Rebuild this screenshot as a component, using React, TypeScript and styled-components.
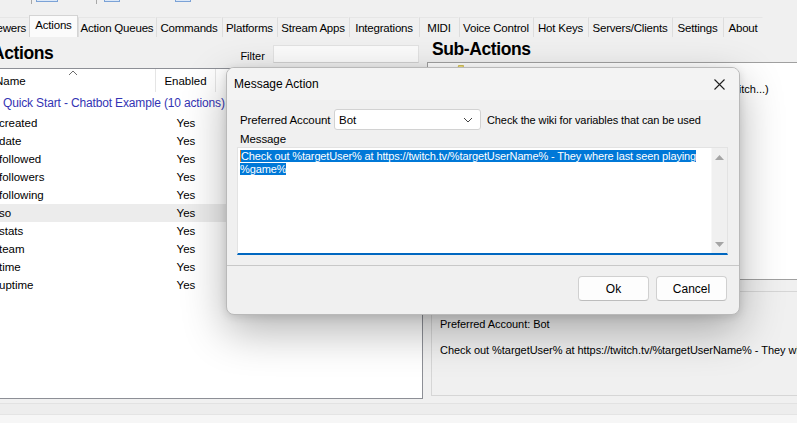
import React from 'react';
import styled, { createGlobalStyle } from 'styled-components';

const FONT = "'Liberation Sans', Arial, sans-serif";

const tabs = [
  { label: 'Viewers', w: 45 },
  { label: 'Actions', w: 49, active: true },
  { label: 'Action Queues', w: 78 },
  { label: 'Commands', w: 66 },
  { label: 'Platforms', w: 55 },
  { label: 'Stream Apps', w: 72 },
  { label: 'Integrations', w: 70 },
  { label: 'MIDI', w: 40 },
  { label: 'Voice Control', w: 74 },
  { label: 'Hot Keys', w: 55 },
  { label: 'Servers/Clients', w: 84 },
  { label: 'Settings', w: 51 },
  { label: 'About', w: 40 }
];

const actions = [
  'created',
  'date',
  'followed',
  'followers',
  'following',
  'so',
  'stats',
  'team',
  'time',
  'uptime'
];

const App: React.FC = () => {
  return (
    <>
      <GlobalStyle />
      <Window>
        <Toolbar>
          <ToolSeparator x={31} />
          <ToolIcon x={36} w={22} />
          <ToolSeparator x={96} />
          <ToolIcon x={104} w={16} />
          <ToolIcon x={175} w={16} />
        </Toolbar>

        <TabStrip>
          {tabs.map(tab => (
            <Tab key={tab.label} w={tab.w} active={!!tab.active}>
              {tab.label}
            </Tab>
          ))}
        </TabStrip>

        <Main>
          <LeftPane>
            <PaneHeader>
              <PaneTitle offset={-8}>Actions</PaneTitle>
              <FilterLabel>Filter</FilterLabel>
              <FilterInput />
            </PaneHeader>
            <ListView>
              <ListHeader>
                <HeaderName>
                  Name
                  <SortCaret width="10" height="6" viewBox="0 0 10 6">
                    <polyline points="1,5 5,1 9,5" fill="none" stroke="#6d6d6d" strokeWidth="1" />
                  </SortCaret>
                </HeaderName>
                <HeaderEnabled>Enabled</HeaderEnabled>
                <HeaderFill />
              </ListHeader>
              <GroupRow>Quick Start - Chatbot Example (10 actions)</GroupRow>
              {actions.map(name => (
                <ActionRow key={name} selected={name === 'so'}>
                  <NameCell>{name}</NameCell>
                  <EnabledCell>Yes</EnabledCell>
                </ActionRow>
              ))}
            </ListView>
          </LeftPane>

          <RightPane>
            <PaneTitle offset={5}>Sub-Actions</PaneTitle>
            <TreeBox>
              <TreeLine>
                <TreeIcon width="8" height="13" viewBox="0 0 8 13">
                  <path d="M2.5 0.5 L7.5 0.5 L5.5 12.5 L0.5 12.5 Z" fill="#f2e27a" stroke="#c9b443" strokeWidth="0.8" />
                </TreeIcon>
                Add target info for target user
              </TreeLine>
              <TreeLine>
                <TreeIcon width="8" height="13" viewBox="0 0 8 13">
                  <path d="M2.5 0.5 L7.5 0.5 L5.5 12.5 L0.5 12.5 Z" fill="#f2e27a" stroke="#c9b443" strokeWidth="0.8" />
                </TreeIcon>
                Twitch Message (Check out %targetUser% at https://twiitch...)
              </TreeLine>
            </TreeBox>
            <DetailBox>
              <DetailText>Send Message</DetailText>
              <DetailText>Preferred Account: Bot</DetailText>
              <DetailText gap={8}>
                Check out %targetUser% at https://twitch.tv/%targetUserName% - They where last seen playing %game%
              </DetailText>
            </DetailBox>
          </RightPane>
        </Main>

        <StatusBar>
          <StatusBand />
        </StatusBar>

        <Dialog>
          <TitleBar>
            <DialogTitle>Message Action</DialogTitle>
            <CloseButton>
              <svg width="11" height="11" viewBox="0 0 11 11">
                <path d="M0.5 0.5 L10.5 10.5 M10.5 0.5 L0.5 10.5" stroke="#1f1f1f" strokeWidth="1.1" />
              </svg>
            </CloseButton>
          </TitleBar>
          <DialogBody>
            <AccountRow>
              <FieldLabel>Preferred Account</FieldLabel>
              <ComboBox>
                <span>Bot</span>
                <svg width="10" height="6" viewBox="0 0 10 6">
                  <polyline points="1,1 5,5 9,1" fill="none" stroke="#444" strokeWidth="1" />
                </svg>
              </ComboBox>
              <HintText>Check the wiki for variables that can be used</HintText>
            </AccountRow>
            <FieldLabel>Message</FieldLabel>
            <MessageBox>
              <MessageText>
                <Selected caret>
                  Check out %targetUser% at https://twitch.tv/%targetUserName% - They where last seen playing{' '}
                </Selected>
                <br />
                <Selected>%game%</Selected>
              </MessageText>
              <ScrollBar>
                <svg width="9" height="5" viewBox="0 0 9 5">
                  <path d="M0 5 L4.5 0 L9 5 Z" fill="#a5a5a5" />
                </svg>
                <svg width="9" height="5" viewBox="0 0 9 5">
                  <path d="M0 0 L4.5 5 L9 0 Z" fill="#a5a5a5" />
                </svg>
              </ScrollBar>
            </MessageBox>
          </DialogBody>
          <DialogFooter>
            <Button>Ok</Button>
            <Button>Cancel</Button>
          </DialogFooter>
        </Dialog>
      </Window>
    </>
  );
};

const GlobalStyle = createGlobalStyle`
  html, body {
    margin: 0;
    padding: 0;
    background: #f0f0f0;
  }
  body {
    font-family: ${FONT};
    font-size: 11px;
    color: #000;
  }
`;

const Window = styled.div`
  position: relative;
  width: 797px;
  height: 423px;
  overflow: hidden;
  background: #f0f0f0;
  display: flex;
  flex-direction: column;
`;

const Toolbar = styled.div`
  position: relative;
  height: 15px;
  flex-shrink: 0;
`;

const ToolIcon = styled.div<{ x: number; w: number }>`
  position: absolute;
  left: ${p => p.x}px;
  top: -10px;
  width: ${p => p.w}px;
  height: 12px;
  border: 1px solid #7ba2d6;
  background: #dbe8f8;
  box-sizing: border-box;
`;

const ToolSeparator = styled.div<{ x: number }>`
  position: absolute;
  left: ${p => p.x}px;
  top: 0;
  width: 1px;
  height: 4px;
  background: #a8a8a8;
`;

const TabStrip = styled.div`
  height: 22px;
  display: flex;
  align-items: flex-end;
  margin-left: -16px;
  flex-shrink: 0;
`;

const Tab = styled.div<{ w: number; active: boolean }>`
  width: ${p => p.w}px;
  height: ${p => (p.active ? 22 : 20)}px;
  box-sizing: border-box;
  display: flex;
  align-items: center;
  justify-content: center;
  padding-bottom: ${p => (p.active ? 3 : 0)}px;
  white-space: nowrap;
  font-size: 11.5px;
  letter-spacing: -0.2px;
  background: ${p => (p.active ? '#fbfbfb' : '#f0f0f0')};
  border-left: 1px solid ${p => (p.active ? '#d4d4d4' : '#dddddd')};
  border-right: 1px solid ${p => (p.active ? '#d4d4d4' : 'transparent')};
  border-top: 1px solid ${p => (p.active ? '#d4d4d4' : '#e6e6e6')};
`;

const Main = styled.div`
  height: 362px;
  display: flex;
  flex-shrink: 0;
`;

const LeftPane = styled.div`
  width: 423px;
  display: flex;
  flex-direction: column;
  flex-shrink: 0;
`;

const PaneHeader = styled.div`
  height: 31px;
  display: flex;
  align-items: center;
  padding-top: 2px;
  box-sizing: border-box;
`;

const PaneTitle = styled.div<{ offset: number }>`
  font-size: 17.5px;
  font-weight: bold;
  letter-spacing: -0.4px;
  height: 25px;
  line-height: 25px;
  margin-left: ${p => p.offset}px;
  flex-shrink: 0;
`;

const FilterLabel = styled.div`
  margin-left: 187px;
  font-size: 11px;
  padding-top: 5px;
`;

const FilterInput = styled.div`
  margin-left: 8px;
  width: 146px;
  height: 18px;
  background: #fbfbfb;
  border: 1px solid #e2e2e2;
  border-bottom-color: #d0d0d0;
  box-sizing: border-box;
`;

const ListView = styled.div`
  flex: 1;
  margin-left: -1px;
  background: #fff;
  border: 1px solid #8d8f96;
  display: flex;
  flex-direction: column;
  overflow: hidden;
`;

const ListHeader = styled.div`
  height: 23px;
  display: flex;
  flex-shrink: 0;
`;

const HeaderName = styled.div`
  position: relative;
  width: 156px;
  display: flex;
  align-items: center;
  text-indent: -5px;
  font-size: 11.5px;
  border-right: 1px solid #e5e5e5;
  box-sizing: border-box;
`;

const SortCaret = styled.svg`
  position: absolute;
  left: 68px;
  top: 1px;
`;

const HeaderEnabled = styled.div`
  width: 60px;
  display: flex;
  align-items: center;
  justify-content: center;
  font-size: 11.5px;
  border-right: 1px solid #e5e5e5;
  box-sizing: border-box;
`;

const HeaderFill = styled.div`
  flex: 1;
`;

const GroupRow = styled.div`
  height: 22px;
  display: flex;
  align-items: center;
  padding-left: 3px;
  color: #3434b4;
  font-size: 12px;
  letter-spacing: -0.15px;
  white-space: nowrap;
`;

const ActionRow = styled.div<{ selected: boolean }>`
  height: 18px;
  display: flex;
  align-items: center;
  background: ${p => (p.selected ? '#ececec' : 'transparent')};
  font-size: 11.5px;
`;

const NameCell = styled.div`
  width: 156px;
  text-indent: -1px;
`;

const EnabledCell = styled.div`
  width: 60px;
  text-align: center;
`;

const RightPane = styled.div`
  flex: 1;
  display: flex;
  flex-direction: column;
  padding-left: 4px;
  min-width: 0;
`;

const TreeBox = styled.div`
  height: 218px;
  background: #fff;
  border: 1px solid #a0a0a0;
  border-right: none;
  box-sizing: border-box;
  display: flex;
  flex-direction: column;
  flex-shrink: 0;
`;

const TreeLine = styled.div`
  height: 17px;
  display: flex;
  align-items: center;
  gap: 4px;
  padding-left: 28px;
  white-space: nowrap;
  font-size: 11px;
`;

const TreeIcon = styled.svg`
  flex-shrink: 0;
`;

const DetailBox = styled.div`
  margin-top: 11px;
  margin-left: 4px;
  height: 105px;
  border: 1px solid #d6d6d6;
  border-right: none;
  box-sizing: border-box;
  padding: 8px 0 0 8px;
  display: flex;
  flex-direction: column;
  gap: 6px;
`;

const DetailText = styled.div<{ gap?: number }>`
  white-space: nowrap;
  font-size: 11px;
  letter-spacing: -0.05px;
  margin-top: ${p => p.gap || 0}px;
`;

const StatusBar = styled.div`
  flex: 1;
  margin-top: 4px;
  border-top: 1px solid #e2e2e2;
  background: #f6f6f6;
`;

const StatusBand = styled.div`
  height: 10px;
  background: #ededed;
  border-bottom: 1px solid #e4e4e4;
`;

const Dialog = styled.div`
  position: absolute;
  left: 226px;
  top: 67px;
  width: 514px;
  height: 248px;
  box-sizing: border-box;
  background: #f0f0f0;
  border: 1px solid #b9b9b9;
  border-radius: 8px;
  box-shadow: 0 16px 44px rgba(0, 0, 0, 0.3), 0 2px 8px rgba(0, 0, 0, 0.12);
  display: flex;
  flex-direction: column;
  overflow: hidden;
`;

const TitleBar = styled.div`
  height: 32px;
  display: flex;
  align-items: center;
  justify-content: space-between;
  padding: 0 10px 0 7px;
  background: #f3f3f3;
  flex-shrink: 0;
`;

const DialogTitle = styled.div`
  font-size: 12px;
`;

const CloseButton = styled.div`
  width: 20px;
  height: 20px;
  display: flex;
  align-items: center;
  justify-content: center;
`;

const DialogBody = styled.div`
  padding: 9px 11px 0 10px;
  display: flex;
  flex-direction: column;
  height: 166px;
  box-sizing: border-box;
  border-bottom: 1px solid #c8c8c8;
  flex-shrink: 0;
`;

const AccountRow = styled.div`
  display: flex;
  align-items: center;
  height: 21px;
  margin-bottom: 2px;
`;

const FieldLabel = styled.div`
  font-size: 11.5px;
  letter-spacing: -0.1px;
  line-height: 14px;
  padding-left: 3px;
  width: 94px;
`;

const ComboBox = styled.div`
  width: 147px;
  height: 21px;
  box-sizing: border-box;
  background: #fff;
  border: 1px solid #d2d2d2;
  border-radius: 3px;
  display: flex;
  align-items: center;
  justify-content: space-between;
  padding: 0 7px 0 4px;
  font-size: 11.5px;
`;

const HintText = styled.div`
  margin-left: 6px;
  font-size: 11px;
  letter-spacing: -0.1px;
  white-space: nowrap;
`;

const MessageBox = styled.div`
  margin-top: 1px;
  height: 108px;
  box-sizing: border-box;
  background: #fff;
  border: 1px solid #e3e3e3;
  border-bottom: 2px solid #0067c0;
  display: flex;
`;

const MessageText = styled.div`
  flex: 1;
  padding: 2px 0 0 2px;
  font-size: 11px;
  letter-spacing: -0.13px;
  line-height: 13px;
  white-space: nowrap;
`;

const Selected = styled.span<{ caret?: boolean }>`
  background: #0078d7;
  color: #fff;
  border-left: ${p => (p.caret ? '1px solid #e8781e' : 'none')};
`;

const ScrollBar = styled.div`
  width: 16px;
  background: #f0f0f0;
  border-left: 1px solid #f7f7f7;
  display: flex;
  flex-direction: column;
  align-items: center;
  justify-content: space-between;
  padding: 7px 0 6px;
  box-sizing: border-box;
`;

const DialogFooter = styled.div`
  flex: 1;
  display: flex;
  justify-content: flex-end;
  align-items: flex-start;
  gap: 7px;
  padding: 10px 12px 0 0;
`;

const Button = styled.div`
  width: 71px;
  height: 25px;
  box-sizing: border-box;
  background: #fdfdfd;
  border: 1px solid #d0d0d0;
  border-bottom-color: #bdbdbd;
  border-radius: 4px;
  display: flex;
  align-items: center;
  justify-content: center;
  font-size: 12px;
`;

export default App;
